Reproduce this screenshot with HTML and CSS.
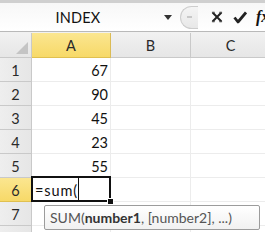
FILE: index.html
```html
<!DOCTYPE html>
<html>
<head>
<meta charset="utf-8">
<link rel="stylesheet" href="styles.css">
</head>
<body>
<div class="app">
  <div class="fbar">
    <div class="namebox">INDEX</div>
    <div class="dd"><svg width="8" height="5" viewBox="0 0 8 5"><path d="M0 0H8L4 5Z" fill="#333"/></svg></div>
    <div class="grip"><span></span></div>
    <div class="btns">
      <svg class="ico" width="12" height="12" viewBox="0 0 13 13"><path d="M2.5 2.5L10.5 10.5M10.5 2.5L2.5 10.5" stroke="#222" stroke-width="2.2" stroke-linecap="square"/><path d="M1 1.5h3M9 1.5h3M1 11.5h3M9 11.5h3" stroke="#555" stroke-width="1.2"/></svg>
      <svg class="ico chk" width="14" height="13" viewBox="0 0 14 13"><path d="M1.5 6.5L5 11L13 1.5" fill="none" stroke="#222" stroke-width="2.8" stroke-linejoin="round"/></svg>
      <span class="fx">fx</span>
    </div>
  </div>
  <div class="sheet">
    <div class="corner"><span class="tri"></span></div>
    <div class="ch sel">A</div>
    <div class="ch">B</div>
    <div class="ch">C</div>

    <div class="rh">1</div><div class="c num">67</div><div class="c"></div><div class="c"></div>
    <div class="rh">2</div><div class="c num">90</div><div class="c"></div><div class="c"></div>
    <div class="rh">3</div><div class="c num">45</div><div class="c"></div><div class="c"></div>
    <div class="rh">4</div><div class="c num">23</div><div class="c"></div><div class="c"></div>
    <div class="rh">5</div><div class="c num">55</div><div class="c"></div><div class="c"></div>
    <div class="rh sel">6</div><div class="c active"><span class="txt">=sum(</span><span class="caret"></span><span class="handle"></span></div><div class="c"></div><div class="c"></div>
    <div class="rh">7</div><div class="c"></div><div class="c"></div><div class="c"></div>
    <div class="rh"></div><div class="c"></div><div class="c"></div><div class="c"></div>
  </div>
  <div class="tip">SUM(<b>number1</b>, [number2], ...)</div>
</div>
</body>
</html>
```
FILE: styles.css
```css
html, body {
  margin: 0;
  padding: 0;
  background: #fff;
}
.app {
  position: relative;
  width: 265px;
  height: 232px;
  overflow: hidden;
  font-family: Lato, "Open Sans", sans-serif;
  color: #111;
}
.fbar {
  height: 28px;
  border-top: 3px solid #cfcfcf;
  border-bottom: 1px solid #b9b9b9;
  background: linear-gradient(#f7f7f7, #ffffff);
  display: flex;
  align-items: center;
}
.fbar > * {
  flex-shrink: 0;
}
.namebox {
  width: 156px;
  text-align: center;
  font-size: 14.5px;
  color: #111;
  letter-spacing: 0.2px;
}
.dd {
  width: 24px;
  display: flex;
  justify-content: center;
  align-items: center;
  padding-top: 1px;
}
.grip {
  width: 18px;
  height: 23px;
  box-sizing: border-box;
  border: 1px solid #cdcdcd;
  border-right: none;
  border-radius: 12px 0 0 12px;
  background: linear-gradient(#f4f4f4, #e8e8e8);
  display: flex;
  align-items: center;
  justify-content: center;
}
.grip span {
  width: 5px;
  height: 2px;
  background: #c8c8c8;
}
.btns {
  display: flex;
  align-items: center;
  padding-left: 13px;
}
.ico { display: block; }
.chk { margin-left: 10px; }
.fx {
  font-family: "Liberation Serif", serif;
  font-style: italic;
  font-weight: bold;
  font-size: 16px;
  margin-left: 9px;
}
.sheet {
  border-top: 1px solid #f1f1f1;
  display: grid;
  grid-template-columns: 32px 79px 80px 80px;
  grid-template-rows: 25px repeat(8, 24px);
}
.corner, .ch, .rh {
  background: linear-gradient(#f1f1f1, #e6e6e6);
  border-right: 1px solid #c9c9c9;
  border-bottom: 1px solid #c9c9c9;
  box-sizing: border-box;
  display: flex;
  align-items: center;
  justify-content: center;
  font-size: 14.5px;
  color: #2a2a2a;
}
.corner {
  position: relative;
}
.tri {
  position: absolute;
  right: 3px;
  bottom: 3px;
  width: 0;
  height: 0;
  border-left: 12px solid transparent;
  border-bottom: 12px solid #c4c4c4;
}
.rh {
  background: linear-gradient(90deg, #eeeeee, #e6e6e6);
  padding-top: 1px;
}
.ch.sel, .rh.sel {
  background: linear-gradient(#fbe690, #f7d968);
  border-bottom-color: #e0c050;
  border-right-color: #dbbb55;
}
.c {
  border-right: 1px solid #ececec;
  border-bottom: 1px solid #ececec;
  box-sizing: border-box;
  font-size: 14.5px;
  display: flex;
  align-items: center;
}
.num {
  justify-content: flex-end;
  padding-right: 2px;
  padding-top: 1px;
}
.active {
  position: relative;
  padding-left: 3px;
}
.active::after {
  content: "";
  position: absolute;
  left: -1px;
  top: -2px;
  right: -1px;
  bottom: -1px;
  border: 2px solid #111;
}
.txt {
  padding-top: 1px;
  letter-spacing: 0.9px;
}
.caret {
  width: 1px;
  height: 24px;
  background: #111;
  margin-left: 0;
  margin-top: -1px;
}
.handle {
  position: absolute;
  right: -4px;
  bottom: -4px;
  width: 5px;
  height: 5px;
  background: #111;
  border: 1px solid #fff;
  z-index: 2;
}
.tip {
  position: absolute;
  left: 44px;
  top: 205px;
  width: 216px;
  height: 25px;
  box-sizing: border-box;
  border: 1px solid #9c9c9c;
  border-radius: 2px;
  background: linear-gradient(#ffffff, #f1f1f1);
  font-size: 14px;
  color: #555;
  padding-left: 5px;
  display: flex;
  align-items: center;
  white-space: nowrap;
}
.tip b {
  color: #333;
}
```
